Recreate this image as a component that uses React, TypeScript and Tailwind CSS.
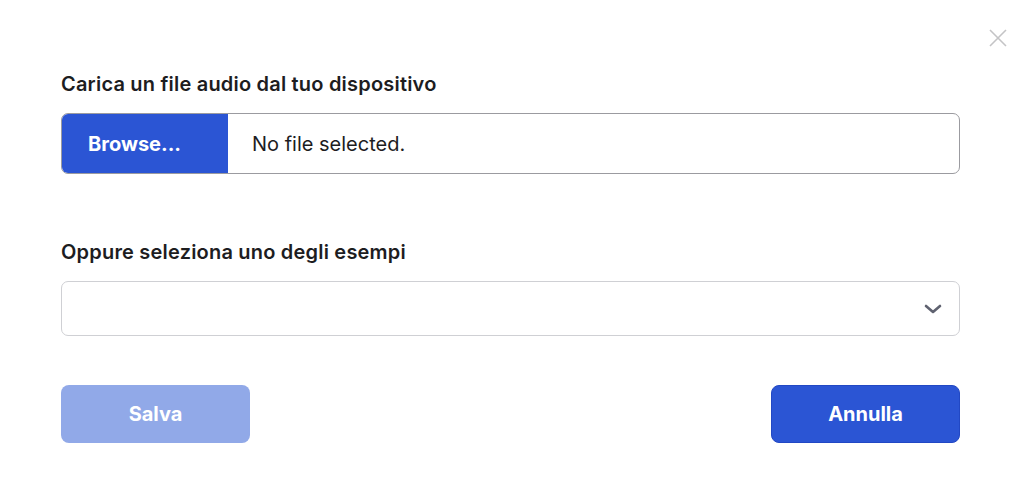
const App = () => {
    return (
        <div className="relative h-[500px] w-[1024px] bg-white font-['Inter','Liberation_Sans',sans-serif] text-[#1d1d1f]">
            {/* close button */}
            <button type="button" className="absolute right-[17px] top-[29px] text-[#c4c4c6]">
                <svg width="18" height="18" viewBox="0 0 18 18" fill="none" stroke="currentColor" strokeWidth="1.6">
                    <path d="M1 1L17 17M17 1L1 17" />
                </svg>
            </button>
            <div className="flex flex-col px-[61px] pt-[72px]">
                <label className="text-[20px] font-semibold leading-[24px] tracking-[0.2px]">Carica un file audio dal tuo dispositivo</label>
                <div className="mt-[17px] flex h-[61px] w-[899px] overflow-hidden rounded-[7px] border border-[#9b9ba0]">
                    <div className="flex w-[166px] items-center pl-[26px] bg-[#2b55d4] text-[20px] font-bold text-white">
                        Browse...
                    </div>
                    <div className="flex items-center pl-[24px] text-[20px]">No file selected.</div>
                </div>
                <label className="mt-[66px] text-[20px] font-semibold leading-[24px] tracking-[0.2px]">Oppure seleziona uno degli esempi</label>
                <div className="mt-[17px] flex h-[55px] w-[899px] items-center justify-end rounded-[7px] border border-[#cfd0d4] pr-[17px]">
                    <svg width="18" height="12" viewBox="0 0 18 12" fill="none" stroke="#5f6270" strokeWidth="2.6" strokeLinecap="round" strokeLinejoin="round">
                        <path d="M2 3L9 9L16 3" />
                    </svg>
                </div>
                <div className="mt-[49px] flex w-[899px] justify-between">
                    <button type="button" className="h-[58px] w-[189px] rounded-[8px] bg-[#91a9e8] text-[20px] font-bold text-white">
                        Salva
                    </button>
                    <button type="button" className="h-[58px] w-[189px] rounded-[8px] border border-[#2248c4] bg-[#2b55d4] text-[20px] font-bold text-white">
                        Annulla
                    </button>
                </div>
            </div>
        </div>
    );
};

export default App;
